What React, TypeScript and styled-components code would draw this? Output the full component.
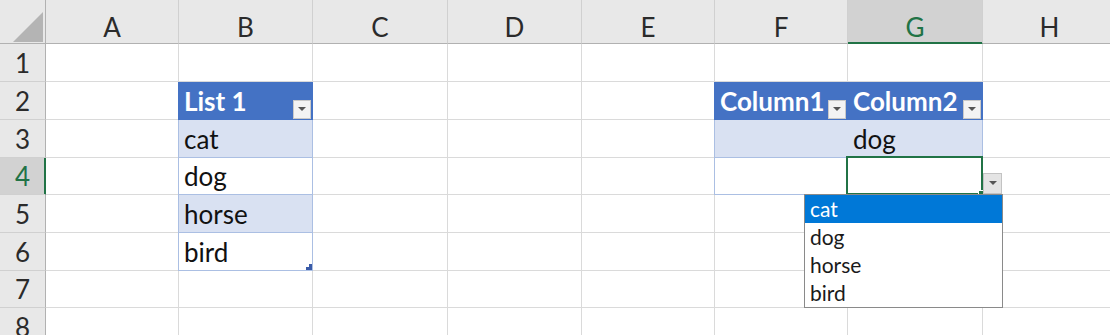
import React from "react";
import styled, { createGlobalStyle, css } from "styled-components";

const GlobalStyle = createGlobalStyle`
  html, body {
    margin: 0;
    padding: 0;
    background: #fff;
  }
  body {
    font-family: Lato, "Liberation Sans", sans-serif;
    color: #111;
    overflow: hidden;
  }
`;

const COL_WIDTHS = [46, 133, 134, 135, 134, 133, 133, 135, 134];
const ROW_HEIGHTS = [44, 38, 38, 38, 37, 38, 38, 37, 38];
const LETTERS = ["A", "B", "C", "D", "E", "F", "G", "H"];
const ROWS = [1, 2, 3, 4, 5, 6, 7, 8];

const GRID = "#dadada";
const HEAD_BG = "#e8e8e8";
const TABLE_BLUE = "#4472c4";
const BAND = "#d9e1f2";
const TABLE_LINE = "#abbfe3";
const EXCEL_GREEN = "#217346";

type Kind = "head" | "band" | "row";

type CellSpec = {
  kind: Kind;
  text?: string;
  filter?: boolean;
  first?: boolean;
  last?: boolean;
  resize?: boolean;
  selected?: boolean;
};

const CELLS: Record<string, CellSpec> = {
  B2: { kind: "head", text: "List 1", filter: true, first: true, last: true },
  B3: { kind: "band", text: "cat", first: true, last: true },
  B4: { kind: "row", text: "dog", first: true, last: true },
  B5: { kind: "band", text: "horse", first: true, last: true },
  B6: { kind: "row", text: "bird", first: true, last: true, resize: true },
  F2: { kind: "head", text: "Column1", filter: true, first: true },
  G2: { kind: "head", text: "Column2", filter: true, last: true },
  F3: { kind: "band", first: true },
  G3: { kind: "band", text: "dog", last: true },
  F4: { kind: "row", first: true },
  G4: { kind: "row", last: true, selected: true },
};

const OPTIONS = ["cat", "dog", "horse", "bird"];

const Sheet = styled.div`
  display: grid;
  grid-template-columns: ${COL_WIDTHS.map((w) => `${w}px`).join(" ")};
  grid-template-rows: ${ROW_HEIGHTS.map((h) => `${h}px`).join(" ")};
  width: 1110px;
  height: 335px;
  overflow: hidden;
`;

const Corner = styled.div`
  box-sizing: border-box;
  background: ${HEAD_BG};
  border-right: 1px solid #b1b1b1;
  border-bottom: 1px solid #b1b1b1;
  display: flex;
  align-items: flex-end;
  justify-content: flex-end;
  padding: 0 2px 1px 0;
`;

const ColHeader = styled.div<{ $active?: boolean }>`
  box-sizing: border-box;
  display: flex;
  align-items: flex-end;
  justify-content: center;
  padding-bottom: 3px;
  font-size: 26px;
  line-height: 1;
  color: #2b2b2b;
  background: ${HEAD_BG};
  border-right: 1px solid #d0d0d0;
  border-bottom: 1px solid #b1b1b1;
  ${(p) =>
    p.$active &&
    css`
      background: #d2d2d2;
      color: ${EXCEL_GREEN};
      border-bottom-color: ${EXCEL_GREEN};
      box-shadow: inset 0 -1px 0 ${EXCEL_GREEN};
    `}
`;

const RowHeader = styled.div<{ $active?: boolean }>`
  box-sizing: border-box;
  display: flex;
  align-items: flex-end;
  justify-content: center;
  padding-bottom: 5px;
  font-size: 26px;
  line-height: 1;
  color: #2b2b2b;
  background: ${HEAD_BG};
  border-right: 1px solid #b1b1b1;
  border-bottom: 1px solid #d0d0d0;
  ${(p) =>
    p.$active &&
    css`
      background: #d2d2d2;
      color: ${EXCEL_GREEN};
      border-right-color: ${EXCEL_GREEN};
      box-shadow: inset -1px 0 0 ${EXCEL_GREEN};
    `}
`;

const kindStyles = {
  head: css`
    background: ${TABLE_BLUE};
    color: #fff;
    font-weight: 700;
    border-right-color: ${TABLE_BLUE};
    border-bottom-color: ${TABLE_BLUE};
  `,
  band: css`
    background: ${BAND};
    border-right-color: ${BAND};
    border-bottom-color: ${TABLE_LINE};
  `,
  row: css`
    background: #fff;
    border-right-color: #fff;
    border-bottom-color: ${TABLE_LINE};
  `,
};

const Cell = styled.div<{
  $kind?: Kind;
  $first?: boolean;
  $last?: boolean;
  $selected?: boolean;
}>`
  box-sizing: border-box;
  position: relative;
  display: flex;
  align-items: flex-end;
  justify-content: space-between;
  padding: 0 1px 0 5px;
  border-right: 1px solid ${GRID};
  border-bottom: 1px solid ${GRID};
  white-space: nowrap;
  ${(p) => p.$kind && kindStyles[p.$kind]}
  ${(p) =>
    p.$last &&
    p.$kind !== "head" &&
    css`
      border-right-color: ${TABLE_LINE};
    `}
  ${(p) =>
    p.$first &&
    css`
      box-shadow: -1px 0 0 ${p.$kind === "head" ? TABLE_BLUE : TABLE_LINE};
    `}
  ${(p) =>
    p.$selected &&
    css`
      &::after {
        content: "";
        position: absolute;
        left: -2px;
        top: -2px;
        right: -1px;
        bottom: -1px;
        border: 2px solid ${EXCEL_GREEN};
        pointer-events: none;
      }
    `}
`;

const CellText = styled.span`
  font-size: 26px;
  line-height: 1;
  padding-bottom: 5px;
`;

const FilterButton = styled.span`
  box-sizing: border-box;
  flex-shrink: 0;
  width: 18px;
  height: 19px;
  background: #f3f3f3;
  border: 1px solid #c9c9c9;
  display: flex;
  align-items: center;
  justify-content: center;
`;

const ResizeHandle = styled.svg`
  position: absolute;
  right: 0;
  bottom: 0;
`;

const FillHandle = styled.span`
  position: absolute;
  right: -3px;
  bottom: -3px;
  width: 5px;
  height: 5px;
  background: ${EXCEL_GREEN};
  border: 1px solid #fff;
  z-index: 3;
`;

const ValidationButton = styled.span`
  box-sizing: border-box;
  position: absolute;
  left: calc(100% + 1px);
  top: 15px;
  width: 19px;
  height: 21px;
  background: #e4e4e4;
  border: 1px solid #c3c3c3;
  display: flex;
  align-items: center;
  justify-content: center;
  z-index: 3;
`;

const Dropdown = styled.ul`
  position: absolute;
  left: -44px;
  top: 100%;
  width: 199px;
  margin: 0;
  padding: 0;
  list-style: none;
  box-sizing: border-box;
  background: #fff;
  border: 1px solid #8a8a8a;
  z-index: 10;
`;

const Option = styled.li<{ $highlighted?: boolean }>`
  height: 28px;
  line-height: 28px;
  padding-left: 5px;
  font-size: 21px;
  font-weight: 400;
  color: ${(p) => (p.$highlighted ? "#fff" : "#1a1a1a")};
  background: ${(p) => (p.$highlighted ? "#0078d7" : "transparent")};
`;

const Arrow = () => (
  <svg width="8" height="5" viewBox="0 0 8 5">
    <polygon points="0,0 8,0 4,4" fill="#555" />
  </svg>
);

const CornerTriangle = () => (
  <svg width="30" height="30" viewBox="0 0 30 30">
    <polygon points="0,30 30,0 30,30" fill="#b4b4b4" />
  </svg>
);

const renderCell = (col: string, row: number) => {
  const id = `${col}${row}`;
  const spec = CELLS[id];
  if (!spec) return <Cell key={id} />;

  return (
    <Cell
      key={id}
      $kind={spec.kind}
      $first={spec.first}
      $last={spec.last}
      $selected={spec.selected}
    >
      {spec.text ? <CellText>{spec.text}</CellText> : <span />}
      {spec.filter && (
        <FilterButton>
          <Arrow />
        </FilterButton>
      )}
      {spec.resize && (
        <ResizeHandle width="6" height="6" viewBox="0 0 6 6">
          <path d="M6 0V6H0V3H3V0Z" fill="#3a5ba8" />
        </ResizeHandle>
      )}
      {spec.selected && (
        <>
          <FillHandle />
          <ValidationButton>
            <Arrow />
          </ValidationButton>
          <Dropdown>
            {OPTIONS.map((o, i) => (
              <Option key={o} $highlighted={i === 0}>
                {o}
              </Option>
            ))}
          </Dropdown>
        </>
      )}
    </Cell>
  );
};

const App = () => (
  <>
    <GlobalStyle />
    <Sheet>
      <Corner>
        <CornerTriangle />
      </Corner>
      {LETTERS.map((l) => (
        <ColHeader key={l} $active={l === "G"}>
          {l}
        </ColHeader>
      ))}
      {ROWS.map((r) => (
        <React.Fragment key={r}>
          <RowHeader $active={r === 4}>{r}</RowHeader>
          {LETTERS.map((l) => renderCell(l, r))}
        </React.Fragment>
      ))}
    </Sheet>
  </>
);

export default App;
